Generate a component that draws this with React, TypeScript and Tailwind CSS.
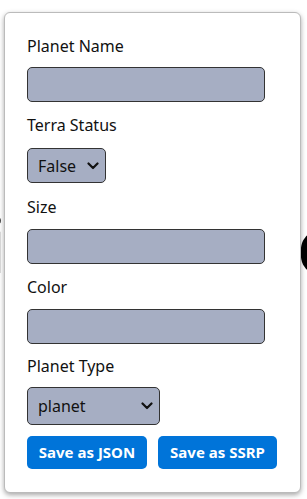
import React, { useState } from 'react';

const Chevron: React.FC = () => (
  <svg
    className="pointer-events-none absolute right-[7px] top-1/2 -translate-y-1/2"
    width="12"
    height="8"
    viewBox="0 0 12 8"
    fill="none"
  >
    <path d="M1.5 1.5L6 6L10.5 1.5" stroke="#111" strokeWidth="2.2" strokeLinecap="round" strokeLinejoin="round" />
  </svg>
);

const App: React.FC = () => {
  const [name, setName] = useState('');
  const [terra, setTerra] = useState('False');
  const [size, setSize] = useState('');
  const [color, setColor] = useState('');
  const [type, setType] = useState('planet');

  const labelClass = "block text-[16px] leading-6 text-[#111]";
  const inputClass = "block w-[238px] h-[35px] bg-[#a6aec3] border border-[#333] rounded-[5px] px-2 text-[16px] outline-none";
  const selectClass = "appearance-none block bg-[#a6aec3] border border-[#333] rounded-[5px] pl-[10px] text-[16px] text-[#111] outline-none";
  const buttonClass = "h-[33px] bg-[#0074d9] text-white font-bold text-[15px] rounded-[5px]";

  return (
    <div className="relative w-[307px] h-[499px] overflow-hidden bg-white font-['Noto_Sans',sans-serif]">
      {/* page content behind the dialog */}
      <div className="pt-[206px] flex text-[76px] leading-[76px] text-black whitespace-nowrap">
        <span className="shrink-0 -ml-[13px]">i</span>
        <span className="shrink-0 ml-auto -mr-[26px]">c</span>
      </div>

      <div className="absolute left-[4px] top-[12px] w-[297px] bg-white border border-[#bbb] rounded-[6px] shadow-[0_2px_5px_rgba(0,0,0,0.35)] pl-[22px] pt-[21px] pb-[23px]">
        <label className={labelClass + " mb-[9px]"}>Planet Name</label>
        <input className={inputClass} value={name} onChange={e => setName(e.target.value)} />

        <label className={labelClass + " mt-[11px] mb-[11px]"}>Terra Status</label>
        <div className="relative w-[79px]">
          <select className={selectClass + " w-[79px] h-[35px]"} value={terra} onChange={e => setTerra(e.target.value)}>
            <option>False</option>
            <option>True</option>
          </select>
          <Chevron />
        </div>

        <label className={labelClass + " mt-[12px] mb-[10px]"}>Size</label>
        <input className={inputClass} value={size} onChange={e => setSize(e.target.value)} />

        <label className={labelClass + " mt-[11px] mb-[10px]"}>Color</label>
        <input className={inputClass} value={color} onChange={e => setColor(e.target.value)} />

        <label className={labelClass + " mt-[10px] mb-[9px]"}>Planet Type</label>
        <div className="relative w-[133px]">
          <select className={selectClass + " w-[133px] h-[38px]"} value={type} onChange={e => setType(e.target.value)}>
            <option>planet</option>
            <option>moon</option>
            <option>star</option>
          </select>
          <Chevron />
        </div>

        <div className="flex gap-[11px] mt-[11px]">
          <button className={buttonClass + " w-[120px]"}>Save as JSON</button>
          <button className={buttonClass + " w-[119px]"}>Save as SSRP</button>
        </div>
      </div>
    </div>
  );
};

export default App;
